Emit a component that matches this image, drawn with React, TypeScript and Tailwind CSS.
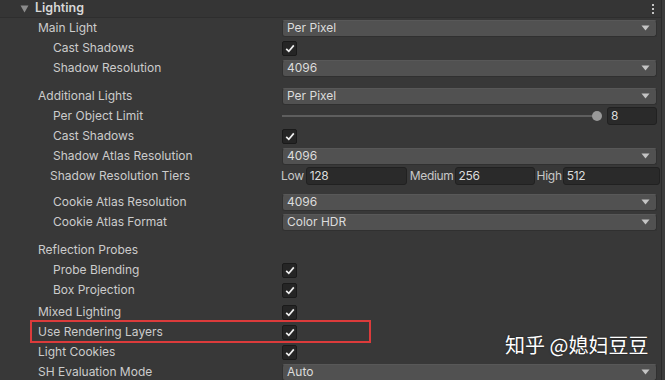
import type { ReactNode } from 'react';

const font = { fontFamily: 'Inter, "Noto Sans", "Liberation Sans", sans-serif' };

function Arrow() {
  return (
    <svg width="9" height="6" viewBox="0 0 9 6" className="shrink-0">
      <path d="M0.5 0.5 H8.5 L4.5 5.5 Z" fill="#c4c4c4" />
    </svg>
  );
}

function Dropdown({ value }: { value: string }) {
  return (
    <div className="flex h-[17px] w-full items-center justify-between rounded-[3px] border border-[#303030] border-t-[#585858] bg-[#515151] pl-[4px] pr-[6px] text-[12px] text-[#dcdcdc]">
      <span>{value}</span>
      <Arrow />
    </div>
  );
}

function Check() {
  return (
    <div className="flex h-[15px] w-[15px] items-center justify-center rounded-[2px] border border-[#1a1a1a] bg-[#252525]">
      <svg width="10" height="9" viewBox="0 0 10 9">
        <path d="M1.2 4.8 L3.8 7.3 L8.8 1.4" fill="none" stroke="#eeeeee" strokeWidth="1.7" />
      </svg>
    </div>
  );
}

function Field({ value, className = '' }: { value: string; className?: string }) {
  return (
    <div
      className={`flex h-[18px] items-center rounded-[3px] border border-[#212121] bg-[#2a2a2a] pl-[3px] text-[12px] text-[#dcdcdc] ${className}`}
    >
      {value}
    </div>
  );
}

function Row({
  label,
  indent = 38,
  children,
  className = '',
}: {
  label: string;
  indent?: number;
  children?: ReactNode;
  className?: string;
}) {
  const pad =
    indent === 53 ? 'pl-[53px]' : indent === 50 ? 'pl-[50px]' : 'pl-[38px]';
  return (
    <div className={`relative flex h-[20px] items-center ${className}`}>
      <div className={`w-[282px] shrink-0 text-[12px] text-[#cccccc] ${pad}`}>{label}</div>
      <div className="mr-[8px] flex flex-1 items-center">{children}</div>
    </div>
  );
}

export default function App() {
  return (
    <div
      className="relative h-[380px] w-[665px] overflow-hidden bg-[#383838] text-[#c8c8c8]"
      style={font}
    >
      <div className="flex h-[18px] items-center justify-between border-b border-[#2e2e2e] bg-[#353535] pl-[20px] pr-[11px]">
        <div className="flex items-center gap-[6px]">
          <svg width="9" height="8" viewBox="0 0 9 8">
            <path d="M0.5 0.5 H8.5 L4.5 7.5 Z" fill="#8c8c8c" />
          </svg>
          <span className="text-[12.5px] font-semibold text-[#d8d8d8]">Lighting</span>
        </div>
        <div className="flex flex-col gap-[2px]">
          <span className="block h-[2px] w-[2px] bg-[#c4c4c4]" />
          <span className="block h-[2px] w-[2px] bg-[#c4c4c4]" />
          <span className="block h-[2px] w-[2px] bg-[#c4c4c4]" />
        </div>
      </div>

      <div className="flex flex-col">
        <Row label="Main Light">
          <Dropdown value="Per Pixel" />
        </Row>
        <Row label="Cast Shadows" indent={53}>
          <Check />
        </Row>
        <Row label="Shadow Resolution" indent={53}>
          <Dropdown value="4096" />
        </Row>

        <Row label="Additional Lights" className="mt-[8px]">
          <Dropdown value="Per Pixel" />
        </Row>
        <Row label="Per Object Limit" indent={53}>
          <div className="relative flex h-[18px] flex-1 items-center">
            <div className="h-[2px] w-full bg-[#5e5e5e]" />
            <div className="absolute right-[-5px] top-[4px] h-[10px] w-[10px] rounded-full bg-[#999999]" />
          </div>
          <Field value="8" className="ml-[10px] w-[50px]" />
        </Row>
        <Row label="Cast Shadows" indent={53}>
          <Check />
        </Row>
        <Row label="Shadow Atlas Resolution" indent={53}>
          <Dropdown value="4096" />
        </Row>
        <Row label="Shadow Resolution Tiers" indent={50}>
          <div className="-ml-[1px] mr-[-3px] flex flex-1 items-center text-[12px] tracking-[-0.3px]">
            <span className="pr-[2px] text-[#c8c8c8]">Low</span>
            <Field value="128" className="w-[101px]" />
            <span className="pl-[3px] pr-[1px] text-[#c8c8c8]">Medium</span>
            <Field value="256" className="w-[80px]" />
            <span className="pl-[2px] pr-[1px] text-[#c8c8c8]">High</span>
            <Field value="512" className="flex-1" />
          </div>
        </Row>

        <Row label="Cookie Atlas Resolution" indent={53} className="mt-[6px]">
          <Dropdown value="4096" />
        </Row>
        <Row label="Cookie Atlas Format" indent={53}>
          <Dropdown value="Color HDR" />
        </Row>

        <Row label="Reflection Probes" className="mt-[8px]" />
        <Row label="Probe Blending" indent={53}>
          <Check />
        </Row>
        <Row label="Box Projection" indent={53}>
          <Check />
        </Row>
        <Row label="Mixed Lighting" className="mt-[2px]">
          <Check />
        </Row>
        <Row label="Use Rendering Layers">
          <Check />
          <div className="absolute bottom-[-1px] left-[30px] top-[-2px] w-[341px] border-2 border-[#dc3b3b]" />
        </Row>
        <Row label="Light Cookies">
          <Check />
        </Row>
        <Row label="SH Evaluation Mode">
          <Dropdown value="Auto" />
        </Row>
      </div>

      <div className="absolute right-0 top-0 h-full w-[4px] border-l border-[#2a2a2a] bg-[#3c3c3c]" />

      <div
        className="absolute left-[505px] top-[332px] text-[20px] leading-[26px] text-white [text-shadow:0_0_2px_rgba(0,0,0,0.6)]"
        style={{ fontFamily: '"Noto Sans CJK SC", "Noto Sans", sans-serif' }}
      >
        知乎 @媳妇豆豆
      </div>
    </div>
  );
}
